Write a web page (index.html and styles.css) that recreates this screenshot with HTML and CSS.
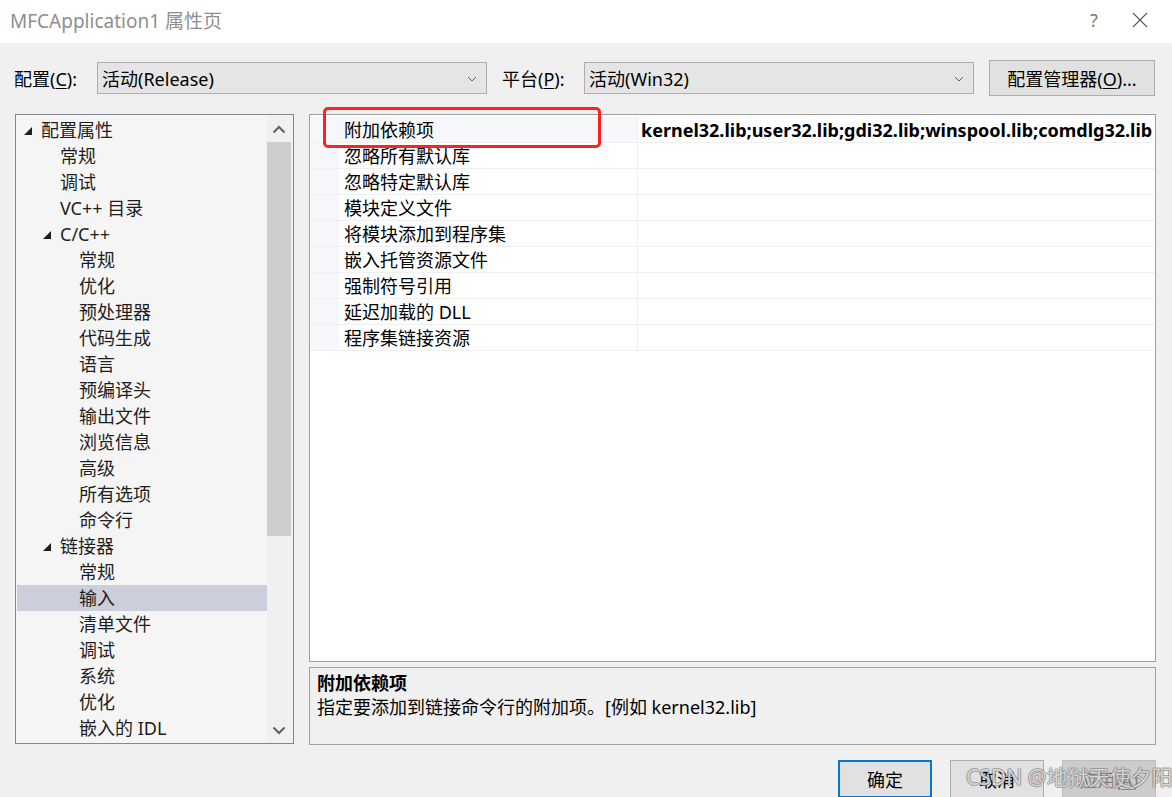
FILE: index.html
```html
<!DOCTYPE html>
<html lang="zh-CN">
<head>
<meta charset="utf-8">
<title>MFCApplication1 属性页</title>
<link rel="stylesheet" href="styles.css">
</head>
<body>
<div class="window">
  <header class="titlebar">
    <span class="title">MFCApplication1 属性页</span>
    <div class="caption">
      <span class="help">?</span>
      <svg class="close" width="16" height="16" viewBox="0 0 16 16"><path d="M1 1 L15 15 M15 1 L1 15" stroke="#5a5a5a" stroke-width="1.1" fill="none"/></svg>
    </div>
  </header>

  <div class="body">
    <div class="toolbar">
      <label class="lbl lbl-cfg">配置(<u>C</u>):</label>
      <div class="combo"><span>活动(Release)</span><svg class="chev" width="10" height="6" viewBox="0 0 10 6"><path d="M1 1 L5 5 L9 1" stroke="#606060" stroke-width="1" fill="none"/></svg></div>
      <label class="lbl lbl-plat">平台(<u>P</u>):</label>
      <div class="combo"><span>活动(Win32)</span><svg class="chev" width="10" height="6" viewBox="0 0 10 6"><path d="M1 1 L5 5 L9 1" stroke="#606060" stroke-width="1" fill="none"/></svg></div>
      <button class="btn btn-cfg">配置管理器(<u>O</u>)...</button>
    </div>

    <div class="main">
      <div class="tree">
        <ul class="items">
          <li class="l0"><svg class="tri" width="9" height="9" viewBox="0 0 9 9"><path d="M8 0 L8 8 L0 8 Z" fill="#1e1e1e"/></svg>配置属性</li>
          <li class="l1">常规</li>
          <li class="l1">调试</li>
          <li class="l1">VC++ 目录</li>
          <li class="l1"><svg class="tri" width="9" height="9" viewBox="0 0 9 9"><path d="M8 0 L8 8 L0 8 Z" fill="#1e1e1e"/></svg>C/C++</li>
          <li class="l2">常规</li>
          <li class="l2">优化</li>
          <li class="l2">预处理器</li>
          <li class="l2">代码生成</li>
          <li class="l2">语言</li>
          <li class="l2">预编译头</li>
          <li class="l2">输出文件</li>
          <li class="l2">浏览信息</li>
          <li class="l2">高级</li>
          <li class="l2">所有选项</li>
          <li class="l2">命令行</li>
          <li class="l1"><svg class="tri" width="9" height="9" viewBox="0 0 9 9"><path d="M8 0 L8 8 L0 8 Z" fill="#1e1e1e"/></svg>链接器</li>
          <li class="l2">常规</li>
          <li class="l2 sel">输入</li>
          <li class="l2">清单文件</li>
          <li class="l2">调试</li>
          <li class="l2">系统</li>
          <li class="l2">优化</li>
          <li class="l2">嵌入的 IDL</li>
        </ul>
        <div class="scrollbar">
          <div class="sb-btn"><svg width="14" height="9" viewBox="0 0 14 9"><path d="M1.5 7.5 L7 2 L12.5 7.5" stroke="#606060" stroke-width="2" fill="none"/></svg></div>
          <div class="sb-thumb"></div>
          <div class="sb-track"></div>
          <div class="sb-btn"><svg width="14" height="9" viewBox="0 0 14 9"><path d="M1.5 1.5 L7 7 L12.5 1.5" stroke="#606060" stroke-width="2" fill="none"/></svg></div>
        </div>
      </div>

      <div class="right">
        <div class="grid">
          <div class="row cur"><div class="margin"></div><div class="name">附加依赖项</div><div class="value">kernel32.lib;user32.lib;gdi32.lib;winspool.lib;comdlg32.lib</div></div>
          <div class="row"><div class="margin"></div><div class="name">忽略所有默认库</div><div class="value"></div></div>
          <div class="row"><div class="margin"></div><div class="name">忽略特定默认库</div><div class="value"></div></div>
          <div class="row"><div class="margin"></div><div class="name">模块定义文件</div><div class="value"></div></div>
          <div class="row"><div class="margin"></div><div class="name">将模块添加到程序集</div><div class="value"></div></div>
          <div class="row"><div class="margin"></div><div class="name">嵌入托管资源文件</div><div class="value"></div></div>
          <div class="row"><div class="margin"></div><div class="name">强制符号引用</div><div class="value"></div></div>
          <div class="row"><div class="margin"></div><div class="name">延迟加载的 DLL</div><div class="value"></div></div>
          <div class="row"><div class="margin"></div><div class="name">程序集链接资源</div><div class="value"></div></div>
          <div class="highlight"></div>
        </div>
        <div class="desc">
          <div class="desc-title">附加依赖项</div>
          <div class="desc-text">指定要添加到链接命令行的附加项。[例如 kernel32.lib]</div>
        </div>
      </div>
    </div>

    <div class="buttons">
      <button class="btn dlg default">确定</button>
      <button class="btn dlg">取消</button>
      <button class="btn dlg disabled">应用(<u>A</u>)</button>
    </div>
  </div>

  <div class="watermark">CSDN @地狱天使夕阳</div>
</div>
</body>
</html>
```

FILE: styles.css
```css
* { box-sizing: border-box; }
html, body { margin: 0; padding: 0; }
body {
  font-family: "Noto Sans", "Noto Sans CJK SC", sans-serif;
  font-size: 18px;
  color: #000;
  background: #f0f0f0;
}
.window {
  position: relative;
  width: 1172px;
  height: 797px;
  overflow: hidden;
  background: #f0f0f0;
}
.titlebar {
  height: 43px;
  background: #fff;
  display: flex;
  align-items: center;
  justify-content: space-between;
  padding-left: 10px;
}
.title {
  font-size: 19px;
  color: #8f8f8f;
  margin-top: -3px;
}
.caption {
  display: flex;
  align-items: center;
  height: 100%;
}
.help {
  width: 48px;
  text-align: center;
  color: #7a7a7a;
  font-size: 18px;
  margin-right: 14px;
  margin-top: -3px;
}
.close {
  margin-right: 24px;
  margin-top: -3px;
}
.body {
  display: flex;
  flex-direction: column;
  padding: 17px 16px 0 15px;
}
.toolbar {
  display: flex;
  align-items: center;
  height: 36px;
}
.lbl { white-space: nowrap; }
.lbl-cfg { width: 83px; margin-left: -1px; }
.lbl-plat { width: 82px; margin-left: 15px; }
.lbl u, .btn u { text-decoration: underline; text-underline-offset: 2px; }
.combo {
  width: 390px;
  height: 32px;
  background: #e5e5e5;
  border: 1px solid #adadad;
  display: flex;
  align-items: center;
  justify-content: space-between;
  padding: 0 9px 0 4px;
}
.chev { margin-top: 1px; }
.btn {
  font-family: inherit;
  font-size: 18px;
  color: #000;
  background: #e1e1e1;
  border: 1px solid #adadad;
  padding: 0;
  margin: 0;
}
.btn-cfg {
  width: 166px;
  height: 36px;
  margin-left: 15px;
}
.main {
  display: flex;
  margin-top: 18px;
  height: 631px;
}
.tree {
  width: 279px;
  height: 630px;
  border: 1px solid #828790;
  background: #f5f5f5;
  display: flex;
}
.items {
  list-style: none;
  margin: 0;
  padding: 2px 0 0 1px;
  flex: 1;
  color: #1e1e1e;
}
.items li {
  height: 26px;
  line-height: 26px;
  display: flex;
  align-items: center;
  white-space: nowrap;
}
.items li.l0 { padding-left: 24px; }
.items li.l1 { padding-left: 43px; }
.items li.l2 { padding-left: 62px; }
.items li.sel { background: #cccedb; }
.tri { margin-left: -17px; margin-right: 8px; margin-top: 2px; }
.scrollbar {
  width: 26px;
  display: flex;
  flex-direction: column;
  background: #f0f0f0;
  padding: 2px 2px 0 0;
}
.sb-btn {
  height: 25px;
  display: flex;
  align-items: center;
  justify-content: center;
}
.sb-thumb {
  height: 394px;
  background: #cdcdcd;
}
.sb-track { flex: 1; }
.right {
  margin-left: 15px;
  flex: 1;
  display: flex;
  flex-direction: column;
  gap: 5px;
}
.grid {
  position: relative;
  height: 548px;
  background: #fff;
  border: 1px solid #a0a0a0;
  padding-top: 2px;
}
.row {
  display: flex;
  height: 26px;
  border-bottom: 1px solid #f0f0f0;
}
.margin {
  width: 29px;
  background: #f5f7fb;
}
.name {
  width: 299px;
  padding-left: 5px;
  padding-top: 2px;
  line-height: 23px;
  border-right: 1px solid #f0f0f0;
  white-space: nowrap;
}
.row.cur .name { background: #f5f7fb; }
.value {
  flex: 1;
  padding-left: 3px;
  padding-top: 2px;
  line-height: 23px;
  font-weight: bold;
  white-space: nowrap;
  overflow: hidden;
}
.highlight {
  position: absolute;
  left: 13px;
  top: -8px;
  width: 278px;
  height: 41px;
  border: 3.5px solid #fb2321;
  border-radius: 5px;
}
.desc {
  height: 78px;
  border: 1px solid #a0a0a0;
  background: #f0f0f0;
  padding: 3px 7px 0;
}
.desc-title { font-weight: bold; line-height: 24px; }
.desc-text { line-height: 24px; }
.buttons {
  display: flex;
  justify-content: flex-end;
  gap: 18px;
  margin-top: 15px;
}
.btn.dlg {
  width: 94px;
  height: 38px;
}
.btn.default {
  border: 2px solid #0078d7;
}
.btn.disabled {
  background: #cccccc;
  border-color: #bfbfbf;
  color: #838383;
}
.watermark {
  position: absolute;
  left: 966px;
  top: 761px;
  font-size: 21px;
  color: rgba(255, 255, 255, 0.7);
  text-shadow: -1px 0 0 rgba(110, 110, 110, 0.55), 1px 0 0 rgba(110, 110, 110, 0.55), 0 -1px 0 rgba(110, 110, 110, 0.55), 0 1px 0 rgba(110, 110, 110, 0.55);
  white-space: nowrap;
  pointer-events: none;
}
```
